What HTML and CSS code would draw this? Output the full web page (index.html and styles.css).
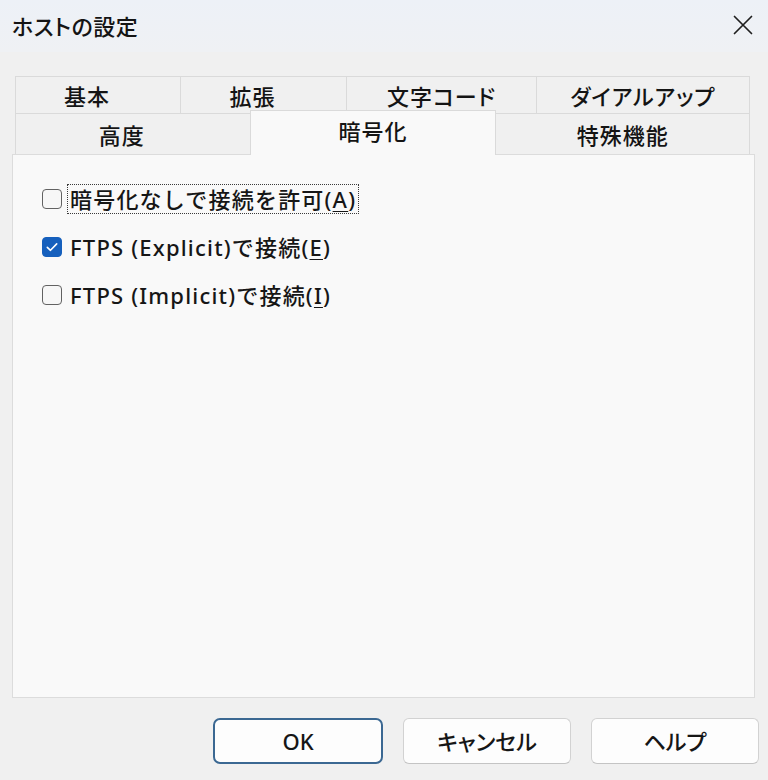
FILE: index.html
```html
<!DOCTYPE html>
<html lang="ja">
<head>
<meta charset="utf-8">
<title>ホストの設定</title>
<link rel="stylesheet" href="styles.css">
</head>
<body>
<div class="dialog">
  <div class="titlebar">
    <span class="title">ホストの設定</span>
    <svg class="close" width="20" height="20" viewBox="0 0 20 20" aria-hidden="true">
      <path d="M1.5 1.5 L18.5 18.5 M18.5 1.5 L1.5 18.5" stroke="#1f1f1f" stroke-width="1.7" fill="none" stroke-linecap="round"/>
    </svg>
  </div>
  <div class="content">
    <div class="tabs">
      <div class="tab-row row1">
        <div class="tab t-kihon shift">基本</div>
        <div class="tab t-kakucho shift">拡張</div>
        <div class="tab t-moji">文字コード</div>
        <div class="tab t-dial">ダイアルアップ</div>
      </div>
      <div class="tab-row row2">
        <div class="tab t-kodo shift">高度</div>
        <div class="tab t-ango active">暗号化</div>
        <div class="tab t-tokushu">特殊機能</div>
      </div>
    </div>
    <div class="panel">
      <div class="check-row">
        <span class="box"></span>
        <span class="label focus">暗号化なしで接続を許可(<u>A</u>)</span>
      </div>
      <div class="check-row">
        <span class="box checked">
          <svg width="20" height="20" viewBox="0 0 20 20" aria-hidden="true">
            <path d="M5.3 10.3 L8.5 13.3 L14.7 6.9" stroke="#ffffff" stroke-width="1.6" fill="none" stroke-linecap="round" stroke-linejoin="round"/>
          </svg>
        </span>
        <span class="label">FTPS (Explicit)で接続(<u>E</u>)</span>
      </div>
      <div class="check-row">
        <span class="box"></span>
        <span class="label">FTPS (Implicit)で接続(<u>I</u>)</span>
      </div>
    </div>
    <div class="buttons">
      <div class="btn btn-default">OK</div>
      <div class="btn">キャンセル</div>
      <div class="btn">ヘルプ</div>
    </div>
  </div>
</div>
</body>
</html>
```
FILE: styles.css
```css
html, body {
  margin: 0;
  padding: 0;
}

body {
  width: 768px;
  height: 780px;
  overflow: hidden;
  background: #f0f0f0;
  font-family: "Noto Sans", "Noto Sans CJK JP", sans-serif;
  color: #1b1b1b;
}

.dialog {
  width: 768px;
  height: 780px;
  background: #f0f0f0;
  display: flex;
  flex-direction: column;
}

.titlebar {
  height: 52px;
  flex: none;
  display: flex;
  align-items: center;
  justify-content: space-between;
  padding: 0 15px 2px 12px;
  box-sizing: border-box;
  background: linear-gradient(#edf1f7, #eff1f4);
}

.title {
  font-family: "Noto Sans CJK JP", sans-serif;
  font-size: 22px;
  font-weight: 500;
  line-height: 26px;
  font-feature-settings: "palt";
  letter-spacing: 0.5px;
  color: #141414;
}

.close {
  display: block;
}

.content {
  flex: 1;
  padding: 24px 9px 0 12px;
  display: flex;
  flex-direction: column;
}

.tabs {
  margin-left: 3px;
  width: 735px;
}

.tab-row {
  display: flex;
}

.row1 {
  height: 38px;
}

.row2 {
  height: 41px;
  margin-top: -1px;
  align-items: flex-end;
}

.tab {
  box-sizing: border-box;
  display: flex;
  align-items: center;
  justify-content: center;
  border: 1px solid #dadada;
  margin-left: -1px;
  background: #f0f0f0;
  font-family: "Noto Sans CJK JP", sans-serif;
  font-size: 22px;
  font-weight: 500;
  line-height: 26px;
  letter-spacing: 1px;
  font-feature-settings: "palt";
  color: #141414;
}

.tab:first-child {
  margin-left: 0;
}

.row1 .tab {
  height: 38px;
}

.row2 .tab {
  height: 41px;
  border-bottom: none;
}

.shift {
  padding-right: 22px;
}

.t-kihon { width: 166px; }
.t-kakucho { width: 167px; }
.t-moji { width: 191px; }
.t-dial { width: 214px; }

.t-kodo { width: 236px; }
.t-ango { width: 247px; }
.t-tokushu { width: 255px; }

.row2 .tab.active {
  height: 45px;
  margin-bottom: -1px;
  background: #f9f9f9;
  position: relative;
  z-index: 1;
  padding-bottom: 6px;
}

.panel {
  width: 743px;
  height: 544px;
  box-sizing: border-box;
  border: 1px solid #dcdcdc;
  background: #f9f9f9;
  padding: 20px 0 0 29px;
  flex: none;
}

.check-row {
  height: 48px;
  display: flex;
  align-items: center;
}

.box {
  width: 20px;
  height: 20px;
  box-sizing: border-box;
  border: 1.5px solid #626262;
  border-radius: 4px;
  background: #f7f7f7;
  flex: none;
  display: flex;
  align-items: center;
  justify-content: center;
}

.box.checked {
  background: #1660bd;
  border-color: #1660bd;
}

.box svg {
  display: block;
  flex: none;
}

.label {
  margin-left: 5px;
  padding: 0 2px;
  border: 1px dotted transparent;
  font-size: 22px;
  font-weight: 500;
  line-height: 28px;
  letter-spacing: 1.2px;
  white-space: nowrap;
  color: #161616;
}

.label.focus {
  border-color: #3a3a3a;
}

.label u {
  text-decoration-thickness: 1px;
  text-underline-offset: 3px;
}

.buttons {
  margin-top: 20px;
  display: flex;
  justify-content: flex-end;
  gap: 20px;
}

.btn {
  width: 168px;
  height: 46px;
  box-sizing: border-box;
  border: 1px solid #d2d2d2;
  border-bottom-color: #c4c4c4;
  border-radius: 6px;
  background: #fdfdfd;
  display: flex;
  align-items: center;
  justify-content: center;
  font-size: 22px;
  font-weight: 500;
  line-height: 26px;
  font-feature-settings: "palt";
  color: #161616;
}

.btn-default {
  width: 170px;
  border: 2px solid #3b6892;
  border-radius: 7px;
}
```
